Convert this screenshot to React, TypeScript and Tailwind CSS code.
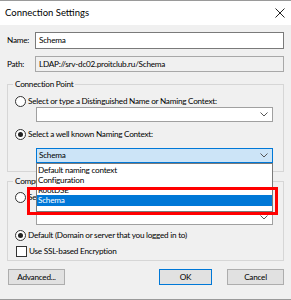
import React from 'react';

const font = { fontFamily: 'Lato, "Segoe UI", "Noto Sans", sans-serif' };

function Chevron() {
  return (
    <svg width="8" height="5" viewBox="0 0 8 5" className="shrink-0">
      <path d="M0.5 0.5 L4 4 L7.5 0.5" fill="none" stroke="#555" strokeWidth="1" />
    </svg>
  );
}

function Radio({ checked }: { checked?: boolean }) {
  return (
    <span className="w-[11px] h-[11px] rounded-full border border-[#333] bg-white flex items-center justify-center shrink-0">
      {checked && <span className="w-[5px] h-[5px] rounded-full bg-[#222]" />}
    </span>
  );
}

function Combo({ value, focused }: { value?: string; focused?: boolean }) {
  return (
    <div
      className={`ml-[28px] w-[237px] h-[15px] flex items-center justify-between pl-[2px] pr-[4px] border ${
        focused ? 'bg-[#cce4f7] border-[#0078d7]' : 'bg-white border-[#a0a0a0]'
      }`}
    >
      <span>{value}</span>
      <Chevron />
    </div>
  );
}

export default function App() {
  return (
    <div style={font} className="relative w-[291px] h-[300px] bg-[#f0f0f0] border-t border-b border-[#9a9a9a] text-[8.2px] tracking-[-0.25px] text-black flex flex-col overflow-hidden">
      {/* title bar */}
      <div className="h-[24px] bg-white flex items-center justify-between pl-[5px] pr-[6px] shrink-0">
        <span className="text-[9.5px] tracking-normal">Connection Settings</span>
        <svg width="10" height="10" viewBox="0 0 10 10">
          <path d="M0.5 0.5 L9.5 9.5 M9.5 0.5 L0.5 9.5" stroke="#222" strokeWidth="1" />
        </svg>
      </div>

      <div className="px-[7px] pt-[7px] flex flex-col">
        <div className="flex items-center h-[17px]">
          <span className="w-[28px]">Name:</span>
          <div className="flex-1 h-[17px] bg-white border border-[#7a7a7a] px-[3px] flex items-center">Schema</div>
        </div>
        <div className="flex items-center h-[16px] mt-[7px]">
          <span className="w-[28px]">Path:</span>
          <div className="flex-1 h-[16px] bg-[#f0f0f0] border border-[#a8a8a8] px-[3px] flex items-center">
            LDAP://srv-dc02.proitclub.ru/Schema
          </div>
        </div>

        {/* connection point */}
        <fieldset className="mt-[6px] border border-[#d6d6d6] pb-[8px]">
          <legend className="ml-[5px] px-[2px] leading-[12px]">Connection Point</legend>
          <div className="flex items-center gap-[2px] ml-[7px] mt-[5px] h-[12px]">
            <Radio />
            <span>Select or type a Distinguished Name or Naming Context:</span>
          </div>
          <Combo />
          <div className="flex items-center gap-[2px] ml-[7px] mt-[6px] h-[12px]">
            <Radio checked />
            <span>Select a well known Naming Context:</span>
          </div>
          <div className="relative mt-[8px]">
            <Combo value="Schema" focused />
            <div className="absolute z-10 left-[28px] top-full w-[237px] h-[49px] bg-white border border-[#7a7a7a] pt-[1px] flex flex-col">
              <div className="h-[10px] leading-[10px] pl-[1px]">Default naming context</div>
              <div className="h-[10px] leading-[10px] pl-[1px]">Configuration</div>
              <div className="h-[10px] leading-[10px] pl-[1px]">RootDSE</div>
              <div className="h-[11px] leading-[11px] pl-[1px] bg-[#0078d7] text-white">Schema</div>
            </div>
          </div>
        </fieldset>

        {/* computer */}
        <fieldset className="mt-[3px] border border-[#d6d6d6] pb-[3px]">
          <legend className="ml-[5px] px-[2px] leading-[12px]">Computer</legend>
          <div className="flex items-center gap-[2px] ml-[7px] mt-[4px] h-[12px]">
            <Radio />
            <span>Select or type a domain or server: (Server | Domain [:port])</span>
          </div>
          <div className="mt-[7px]">
            <Combo />
          </div>
          <div className="flex items-center gap-[2px] ml-[7px] mt-[4px] h-[12px]">
            <Radio checked />
            <span>Default (Domain or server that you logged in to)</span>
          </div>
          <div className="flex items-center gap-[2px] ml-[8px] mt-[4px] h-[12px]">
            <span className="w-[11px] h-[11px] border border-[#333] bg-white shrink-0" />
            <span>Use SSL-based Encryption</span>
          </div>
        </fieldset>

        <div className="flex items-center mt-[8px]">
          <button className="ml-[1px] w-[57px] h-[16px] bg-[#e1e1e1] border border-[#adadad] flex items-center justify-center">
            Advanced...
          </button>
          <div className="flex-1" />
          <button className="w-[53px] h-[16px] bg-[#e1e1e1] border border-[#0078d7] flex items-center justify-center">OK</button>
          <button className="ml-[15px] w-[57px] h-[16px] bg-[#e1e1e1] border border-[#adadad] flex items-center justify-center">
            Cancel
          </button>
        </div>
      </div>

      {/* highlight frame */}
      <div className="absolute z-20 left-[27px] top-[186px] w-[251px] h-[28px] border-[3px] border-[#ff0000]" />
    </div>
  );
}
